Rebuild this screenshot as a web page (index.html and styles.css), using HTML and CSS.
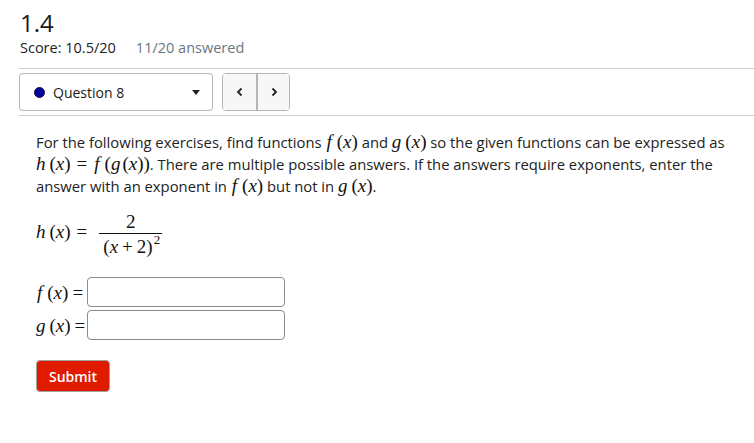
FILE: index.html
```html
<!DOCTYPE html>
<html lang="en">
<head>
<meta charset="utf-8">
<title>1.4</title>
<link rel="stylesheet" href="styles.css">
</head>
<body>
<div class="page">
  <h1 class="title">1.4</h1>
  <div class="meta"><span class="score">Score: 10.5/20</span><span class="answered">11/20 answered</span></div>
  <div class="navbar">
    <div class="select"><span class="dot"></span><span class="qlabel">Question 8</span><span class="caret"></span></div>
    <div class="pager">
      <button class="pbtn" aria-label="Previous"><svg width="8" height="10" viewBox="0 0 8 10"><polyline points="5.5,1.5 2,5 5.5,8.5" fill="none" stroke="#222" stroke-width="1.8"/></svg></button>
      <button class="pbtn" aria-label="Next"><svg width="8" height="10" viewBox="0 0 8 10"><polyline points="2.5,1.5 6,5 2.5,8.5" fill="none" stroke="#222" stroke-width="1.8"/></svg></button>
    </div>
  </div>
  <div class="question">
    <p class="prompt">For the following exercises, find functions <span class="m"><i class="f">f</i><span class="fn">(<i>x</i>)</span></span> and <span class="m"><i>g</i><span class="fn">(<i>x</i>)</span></span> so the given functions can be expressed as <span class="m"><i>h</i><span class="fn">(<i>x</i>)</span><span class="rel">=</span><i class="f">f</i><span class="fn">(<i>g</i><span class="fn">(<i>x</i>)</span>)</span></span>. There are multiple possible answers. If the answers require exponents, enter the answer with an exponent in <span class="m"><i class="f">f</i><span class="fn">(<i>x</i>)</span></span> but not in <span class="m"><i>g</i><span class="fn">(<i>x</i>)</span></span>.</p>
    <div class="formula m">
      <span class="lhs"><i>h</i><span class="fn">(<i>x</i>)</span><span class="rel">=</span></span>
      <span class="frac"><span class="num">2</span><span class="den">(<i>x</i><span class="bin">+</span>2)<sup>2</sup></span></span>
    </div>
    <div class="answers">
      <label class="arow"><span class="m lbl"><i class="f">f</i><span class="fn">(<i>x</i>)</span><span class="eq">=</span></span><input class="ans ans-f" type="text"></label>
      <label class="arow"><span class="m lbl"><i>g</i><span class="fn">(<i>x</i>)</span><span class="eq">=</span></span><input class="ans" type="text"></label>
    </div>
    <button class="submit">Submit</button>
  </div>
</div>
</body>
</html>
```
FILE: styles.css
```css
* { box-sizing: border-box; }
html, body { margin: 0; padding: 0; background: #fff; }
body {
  font-family: "Open Sans", "Liberation Sans", sans-serif;
  color: #222;
  font-size: 14px;
}
.page { padding: 9px 0 0 19px; }
.title {
  margin: 0 0 0 1px;
  font-size: 24px;
  font-weight: 400;
  line-height: 28px;
  color: #1a1a1a;
}
.meta {
  font-size: 14.5px;
  line-height: 21px;
  margin: 0 0 10px 1px;
  display: flex;
  gap: 20px;
}
.score { color: #222; }
.answered { color: #6b7680; }
.navbar {
  border-top: 1px solid #d0d0d0;
  border-bottom: 1px solid #d0d0d0;
  padding: 4px 0;
  display: flex;
  gap: 9px;
}
.select {
  width: 194px;
  height: 38px;
  border: 1px solid #b5b5b5;
  border-radius: 4px;
  display: flex;
  align-items: center;
  padding-left: 14px;
  padding-right: 8px;
}
.dot {
  width: 11px;
  height: 11px;
  border-radius: 50%;
  background: #00009c;
  border: 1px solid #10104a;
  margin-right: 8px;
}
.qlabel { flex: 1; color: #1a1a1a; }
.caret {
  width: 0; height: 0;
  border-left: 4.5px solid transparent;
  border-right: 4.5px solid transparent;
  border-top: 5px solid #222;
  margin-right: 4px;
}
.pager {
  display: flex;
  border: 1px solid #b5b5b5;
  border-radius: 4px;
  overflow: hidden;
  height: 38px;
}
.pbtn {
  width: 33px;
  border: 0;
  background: #f7f7f7;
  padding: 0;
  display: flex;
  align-items: center;
  justify-content: center;
}
.pbtn + .pbtn { border-left: 2px solid #b5b5b5; }
.question { padding: 15px 18px 0 17px; }
.prompt {
  margin: 0;
  font-size: 14.8px;
  line-height: 22px;
  color: #222;
}
.m {
  font-family: "Liberation Serif", "DejaVu Serif", serif;
  font-size: 19px;
  line-height: 1;
  color: #111;
}
.m i { font-style: italic; }
.m i.f { margin-left: 1px; margin-right: 1px; }
.fn { margin-left: 4px; }
.fn .fn { margin-left: 2px; }
.rel { margin: 0 6px; }
.formula {
  display: flex;
  align-items: center;
  margin-top: 9px;
}
.lhs { margin-right: 6px; }
.frac {
  display: inline-flex;
  flex-direction: column;
  align-items: center;
  margin-top: 6px;
}
.num { padding: 0 0 2px; }
.den {
  border-top: 1px solid #111;
  padding: 3px 4px 0;
  width: 63px;
  text-align: center;
}
.bin { margin: 0 4px; }
.den sup { font-size: 13px; vertical-align: 9px; line-height: 0; margin-left: 1px; }
.answers {
  margin-top: 21px;
  display: flex;
  flex-direction: column;
  gap: 3px;
}
.arow { display: flex; align-items: center; }
.eq { margin-left: 4px; margin-right: 2px; }
.ans {
  width: 198px;
  height: 30px;
  border: 1px solid #8a8a8a;
  border-radius: 4px;
  margin: 0;
}
.ans-f { margin-left: 2px; }
.submit {
  margin-top: 20px;
  width: 74px;
  height: 32px;
  background: #e01b00;
  color: #fff;
  border: 1px solid #a0a0a0;
  border-radius: 4px;
  font-family: "Open Sans", "Liberation Sans", sans-serif;
  font-size: 14px;
  font-weight: 600;
  padding: 0;
}
```
